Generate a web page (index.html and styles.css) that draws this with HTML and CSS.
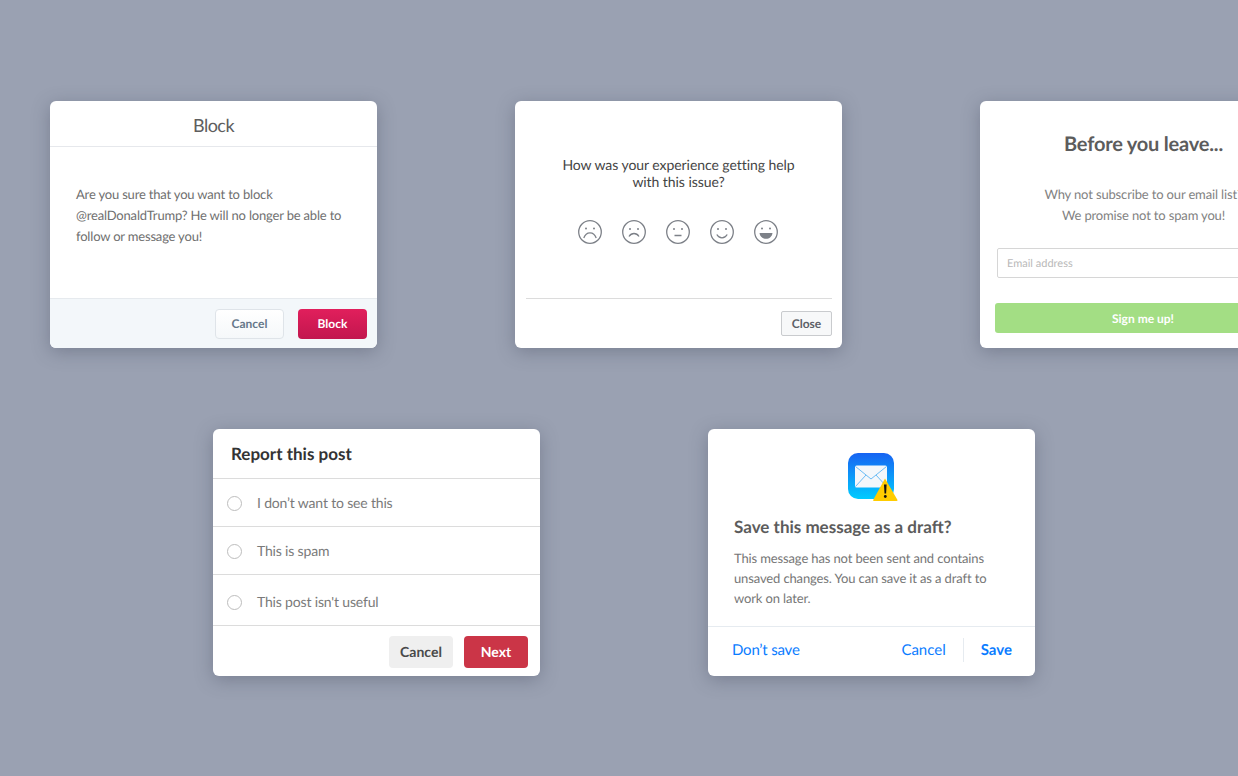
FILE: index.html
```html
<!DOCTYPE HTML>
<html>
	<head>
		<title>Modals</title>
		<link rel="stylesheet" href="styles.css">
	</head>
	<body>
		<div class="row row-top">
			<div class="modal">
				<div class="block-title">Block</div>
				<div class="block-body">Are you sure that you want to block @realDonaldTrump? He will no longer be able to follow or message you!</div>
				<div class="block-footer">
					<button class="button block-cancel">Cancel</button>
					<button class="button block-ok">Block</button>
				</div>
			</div>
			<div class="modal">
				<div class="rate-body">
					<div class="rate-question">How was your experience getting help<br>with this issue?</div>
					<div class="faces">
						<svg class="face" viewBox="0 0 24 24"><circle cx="12" cy="12" r="11.3"/><circle class="dot" cx="8" cy="8.600" r="1"/><circle class="dot" cx="16" cy="8.600" r="1"/><path d="M5.800 18c1.200-3.600 3.400-5.200 6.200-5.200s5 1.600 6.200 5.200"/></svg>
						<svg class="face" viewBox="0 0 24 24"><circle cx="12" cy="12" r="11.3"/><circle class="dot" cx="8" cy="9" r="1"/><circle class="dot" cx="16" cy="9" r="1"/><path d="M7 16.500c1.300-2 3-3 5-3s3.700 1 5 3"/></svg>
						<svg class="face" viewBox="0 0 24 24"><circle cx="12" cy="12" r="11.3"/><circle class="dot" cx="8" cy="9" r="1"/><circle class="dot" cx="16" cy="9" r="1"/><path d="M8.500 15.500h7"/></svg>
						<svg class="face" viewBox="0 0 24 24"><circle cx="12" cy="12" r="11.3"/><circle class="dot" cx="8" cy="9" r="1"/><circle class="dot" cx="16" cy="9" r="1"/><path d="M6.800 14.500c1.200 2.200 3 3.300 5.200 3.300s4-1.100 5.200-3.300"/></svg>
						<svg class="face" viewBox="0 0 24 24"><circle cx="12" cy="12" r="11.3"/><circle class="dot" cx="8" cy="8.500" r="1"/><circle class="dot" cx="16" cy="8.500" r="1"/><path class="mouth" d="M5.500 13h13c-.4 3.500-3.100 5.800-6.500 5.800s-6.100-2.300-6.500-5.800z"/></svg>
					</div>
				</div>
				<div class="rate-footer">
					<button class="button rate-close">Close</button>
				</div>
			</div>
			<div class="modal">
				<div class="leave-title">Before you leave...</div>
				<div class="leave-text">Why not subscribe to our email list?<br>We promise not to spam you!</div>
				<input class="leave-input" type="text" placeholder="Email address">
				<button class="button leave-submit">Sign me up!</button>
			</div>
		</div>
		<div class="row row-bottom">
			<div class="modal">
				<div class="report-title">Report this post</div>
				<div class="report-option"><span class="radio"></span>I don’t want to see this</div>
				<div class="report-option"><span class="radio"></span>This is spam</div>
				<div class="report-option report-option-last"><span class="radio"></span>This post isn't useful</div>
				<div class="report-footer">
					<button class="button report-cancel">Cancel</button>
					<button class="button report-next">Next</button>
				</div>
			</div>
			<div class="modal">
				<div class="draft-body">
					<svg class="draft-icon" viewBox="0 0 50 48">
						<defs>
							<linearGradient id="mail_bg" x1="0" y1="0" x2="0" y2="1">
								<stop offset="0" stop-color="#1763f2"/>
								<stop offset="1" stop-color="#00ccff"/>
							</linearGradient>
						</defs>
						<rect x="0" y="0" width="46" height="46" rx="10" fill="url(#mail_bg)"/>
						<rect x="7" y="12.500" width="32" height="22" rx="1.500" fill="#f4f7fb"/>
						<path d="M7.500 13.500 L23 26 L38.500 13.500 M7.500 33.500 L18 22 M38.500 33.500 L28 22" fill="none" stroke="#6cbcf5" stroke-width="1"/>
						<path d="M37 25.500 L49.500 47 Q49.800 48 48.500 48 L26 48 Q24.800 48 25.200 47 Z" fill="#ffcc00"/>
						<path d="M36 31.500 h2.600 l-.5 9 h-1.600 z" fill="#111"/>
						<circle cx="37.300" cy="43.500" r="1.400" fill="#111"/>
					</svg>
					<div class="draft-title">Save this message as a draft?</div>
					<div class="draft-text">This message has not been sent and contains unsaved changes. You can save it as a draft to work on later.</div>
				</div>
				<div class="draft-footer">
					<span class="draft-link draft-dont">Don’t save</span>
					<span class="draft-right">
						<span class="draft-link draft-cancel">Cancel</span>
						<span class="draft-link draft-save">Save</span>
					</span>
				</div>
			</div>
		</div>
	</body>
</html>
```

FILE: styles.css
```css
html, body {
	margin: 0;
	height: 776px;
	overflow: hidden;
}
body {
	background: #9aa1b2;
	font-family: "Lato", sans-serif;
	text-rendering: geometricPrecision;
	padding-top: 101px;
	box-sizing: border-box;
}
.row {
	display: flex;
}
.row-top {
	gap: 138px;
	padding-left: 50px;
	margin-bottom: 81px;
}
.row-bottom {
	gap: 168px;
	padding-left: 213px;
}
.modal {
	flex: none;
	display: flex;
	flex-direction: column;
	width: 327px;
	height: 247px;
	box-sizing: border-box;
	background: #fff;
	border-radius: 6px;
	overflow: hidden;
	box-shadow: 0 4px 18px rgba(60, 66, 85, 0.35);
}
.button {
	font-family: inherit;
	text-rendering: inherit;
	padding: 0;
	cursor: pointer;
}

/* block */
.block-title {
	height: 45px;
	line-height: 48px;
	border-bottom: 1px solid #e6e8ec;
	text-align: center;
	font-size: 18px;
	letter-spacing: -0.5px;
	color: #5e5e5e;
}
.block-body {
	flex: 1;
	padding: 37px 26px 0;
	font-size: 13px;
	line-height: 21px;
	letter-spacing: -0.18px;
	color: #6f6f6f;
}
.block-footer {
	display: flex;
	justify-content: flex-end;
	gap: 14px;
	height: 50px;
	padding: 10px 10px 0 0;
	box-sizing: border-box;
	background: #f3f7fa;
	border-top: 1px solid #e6eaee;
}
.block-footer .button {
	width: 69px;
	height: 30px;
	padding-bottom: 2px;
	border-radius: 4px;
	font-size: 12px;
	font-weight: bold;
}
.block-cancel {
	background: linear-gradient(#fff, #f5f8fa);
	border: 1px solid #dfe4e9;
	color: #66788a;
}
.block-ok {
	background: linear-gradient(#e11f5c, #c2164e);
	border: 0;
	color: #fff;
}

/* rating */
.rate-body {
	flex: 1;
	text-align: center;
}
.rate-question {
	padding-top: 55px;
	font-size: 14px;
	line-height: 17px;
	letter-spacing: -0.06px;
	color: #444;
}
.faces {
	display: flex;
	justify-content: center;
	gap: 20px;
	margin-top: 30px;
	padding-right: 2px;
}
.face {
	width: 24px;
	height: 24px;
	fill: none;
	stroke: #7d8188;
	stroke-width: 1.300;
}
.face .dot {
	fill: #7d8188;
	stroke: none;
}
.face .mouth {
	fill: #7d8188;
	stroke: none;
}
.rate-footer {
	display: flex;
	justify-content: flex-end;
	height: 50px;
	margin: 0 10px 0 11px;
	padding-top: 12px;
	box-sizing: border-box;
	border-top: 1px solid #dcdcdc;
}
.rate-close {
	width: 51px;
	height: 25px;
	background: #f7f8f9;
	border: 1px solid #c9cbce;
	border-radius: 2px;
	font-size: 12px;
	font-weight: bold;
	color: #5d6168;
}

/* subscribe */
.leave-title {
	padding-top: 30px;
	text-align: center;
	font-size: 20px;
	line-height: 26px;
	letter-spacing: -0.2px;
	font-weight: bold;
	color: #5c5c5c;
}
.leave-text {
	margin-top: 27px;
	text-align: center;
	font-size: 13px;
	line-height: 21px;
	letter-spacing: -0.15px;
	color: #828282;
}
.leave-input {
	display: block;
	width: 293px;
	height: 30px;
	margin: 22px 0 0 17px;
	padding: 1px 9px 0;
	box-sizing: border-box;
	background: #fff;
	border: 1px solid #d6d6d6;
	border-radius: 2px;
	font-family: inherit;
	text-rendering: inherit;
	font-size: 11px;
	outline: none;
}
.leave-input::placeholder {
	color: #b9b9b9;
	opacity: 1;
}
.leave-submit {
	display: block;
	width: 296px;
	height: 30px;
	margin: 25px 0 0 15px;
	background: #a3de84;
	border: 0;
	border-radius: 3px;
	font-size: 12px;
	font-weight: bold;
	color: #fff;
}

/* report */
.report-title {
	height: 50px;
	padding-left: 18px;
	line-height: 49px;
	box-sizing: border-box;
	border-bottom: 1px solid #dcdcdc;
	font-size: 17px;
	font-weight: bold;
	color: #333;
}
.report-option {
	display: flex;
	align-items: center;
	gap: 15px;
	height: 48px;
	padding-left: 14px;
	box-sizing: border-box;
	border-bottom: 1px solid #dcdcdc;
	font-size: 14px;
	letter-spacing: -0.17px;
	color: #7a7a7a;
}
.report-option-last {
	height: 51px;
	padding-top: 2px;
}
.radio {
	width: 15px;
	height: 15px;
	margin-top: 2px;
	box-sizing: border-box;
	border: 1px solid #bdbdbd;
	border-radius: 50%;
}
.report-footer {
	display: flex;
	justify-content: flex-end;
	gap: 11px;
	padding: 10px 12px 0 0;
}
.report-footer .button {
	width: 64px;
	height: 32px;
	padding-bottom: 1px;
	border: 0;
	border-radius: 4px;
	font-size: 14px;
	font-weight: bold;
}
.report-cancel {
	background: #efefef;
	color: #4a4a4a;
}
.report-next {
	background: #cb3547;
	color: #fff;
}

/* draft */
.draft-body {
	flex: 1;
	padding: 24px 26px 0;
}
.draft-icon {
	display: block;
	width: 50px;
	height: 48px;
	margin-left: 114px;
}
.draft-title {
	margin-top: 16px;
	font-size: 17px;
	line-height: 20px;
	font-weight: bold;
	color: #5c5c5c;
}
.draft-text {
	margin-top: 11px;
	font-size: 13px;
	line-height: 20px;
	letter-spacing: -0.13px;
	color: #767676;
}
.draft-footer {
	display: flex;
	justify-content: space-between;
	align-items: center;
	height: 50px;
	padding: 0 23px 3px 24px;
	box-sizing: border-box;
	border-top: 1px solid #e6ebf0;
}
.draft-link {
	font-size: 15px;
	color: #0a7cff;
}
.draft-dont {
	letter-spacing: -0.2px;
}
.draft-right {
	display: flex;
	align-items: center;
}
.draft-cancel {
	padding-right: 17px;
	line-height: 24px;
	border-right: 1px solid #e6ebf0;
}
.draft-save {
	padding-left: 17px;
	font-weight: bold;
}
```
